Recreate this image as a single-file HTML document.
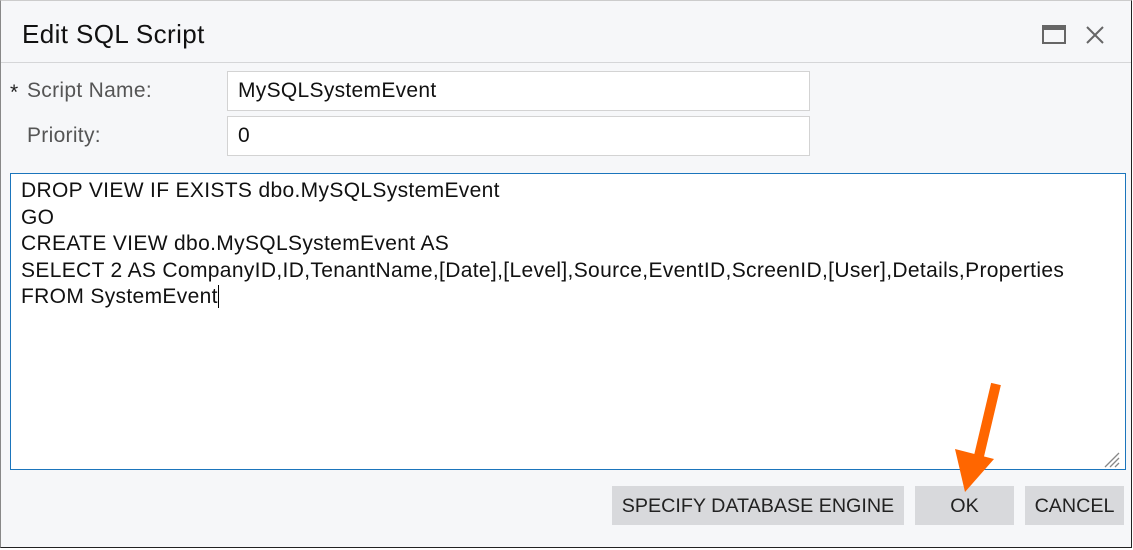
<!DOCTYPE html>
<html><head><style>
body{margin:0;width:1133px;height:549px;overflow:hidden;background:#fff;font-family:"Liberation Sans",Arial,sans-serif;}
.d{position:absolute;left:0;top:0;width:1130px;height:546px;border:1px solid #222;border-left-color:#888;border-top-color:#ccc;background:#f6f7f9;}
.t{position:absolute;left:21px;top:18px;font-size:26px;letter-spacing:0.4px;color:#111;}
.sep{position:absolute;left:0;top:61px;width:1130px;height:1px;background:#d5d6d8;}
.l{position:absolute;font-size:21px;letter-spacing:0.3px;color:#555;}
.in{position:absolute;left:226px;background:#fff;border:1px solid #d3d3d3;font-size:21px;letter-spacing:0.3px;color:#111;line-height:38px;padding-left:10px;box-sizing:border-box;width:583px;height:40px;}
.ta{position:absolute;left:9px;top:172px;width:1116px;height:297px;box-sizing:border-box;border:1px solid #1b75bc;background:#fff;padding:4px 0 0 10px;font-size:21px;letter-spacing:0.34px;line-height:26.5px;color:#111;white-space:pre;}
.b{position:absolute;top:485px;height:39px;background:#d8d9dc;font-size:19.7px;color:#222;text-align:center;line-height:41px;}
</style></head><body>
<div class="d">
<div class="t">Edit SQL Script</div>
<svg style="position:absolute;left:1040px;top:23px" width="70" height="22">
<rect x="2" y="2" width="22" height="17" fill="none" stroke="#666" stroke-width="2"/><rect x="2" y="2" width="22" height="4" fill="#666"/>
<path d="M46 3 L62 19 M62 3 L46 19" stroke="#666" stroke-width="2"/></svg>
<div class="sep"></div>
<div class="l" style="left:9px;top:80px;color:#222">*</div>
<div class="l" style="left:26px;top:78px">Script Name:</div>
<div class="l" style="left:26px;top:123px">Priority:</div>
<div class="in" style="top:70px">MySQLSystemEvent</div>
<div class="in" style="top:115px">0</div>
<div class="ta">DROP VIEW IF EXISTS dbo.MySQLSystemEvent
GO
CREATE VIEW dbo.MySQLSystemEvent AS
SELECT 2 AS CompanyID,ID,TenantName,[Date],[Level],Source,EventID,ScreenID,[User],Details,Properties
FROM SystemEvent<span style="border-left:1px solid #000;margin-left:0"></span></div>
<svg style="position:absolute;left:1100px;top:448px" width="20" height="20"><path d="M18 4 L4 18 M18 9 L9 18 M18 14 L14 18" stroke="#888" stroke-width="1.3"/></svg>
<div class="b" style="left:611px;width:292px">SPECIFY DATABASE ENGINE</div>
<div class="b" style="left:914px;width:99px">OK</div>
<div class="b" style="left:1024px;width:99px">CANCEL</div>
<svg style="position:absolute;left:0;top:0" width="1133" height="549"><path d="M995 383 L978 455" stroke="#ff6600" stroke-width="10"/><polygon points="954,448 993,458 964,491" fill="#ff6600"/></svg>
</div>
</body></html>
